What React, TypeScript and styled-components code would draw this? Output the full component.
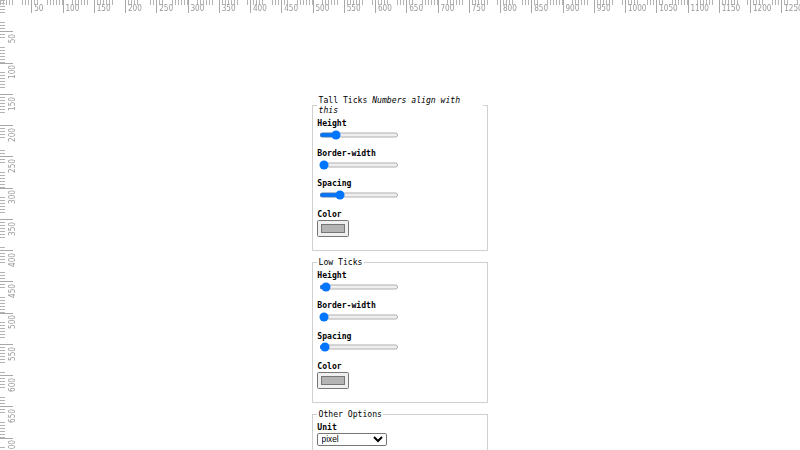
import React, { useState } from "react";
import styled, { createGlobalStyle } from "styled-components";

// page was laid out at 1280x720 and shot at 800x450
const GlobalStyle = createGlobalStyle`
  html, body {
    margin: 0;
    background: #fff;
  }
  body {
    zoom: 0.625;
    font-family: "DejaVu Sans Mono", monospace;
    font-size: 13px;
    color: #000;
  }
`;

const TICK = "#b4b4b4";

const rulerFont = `
  font-family: "Liberation Sans Narrow", "DejaVu Sans Condensed", "Liberation Sans", Arial, sans-serif;
  font-stretch: condensed;
  font-size: 13px;
  line-height: 1;
  color: #9a9a9a;
`;

const TopRuler = styled.div`
  position: fixed;
  top: 0;
  left: 0;
  right: 0;
  height: 20px;
  display: flex;
  padding-left: 50px;
  background-image: repeating-linear-gradient(
    to right,
    ${TICK} 0 1px,
    transparent 1px 5px
  );
  background-size: 100% 8px;
  background-repeat: no-repeat;
  pointer-events: none;
  z-index: 2;
`;

const TopMark = styled.div`
  flex: 0 0 50px;
  height: 20px;
  box-sizing: border-box;
  border-left: 1px solid #a8a8a8;
`;

const TopLabel = styled.span`
  display: block;
  margin: 6px 0 0 3px;
  ${rulerFont}
`;

const SideRuler = styled.div`
  position: fixed;
  top: 0;
  left: 0;
  bottom: 0;
  width: 20px;
  display: flex;
  flex-direction: column;
  padding-top: 50px;
  background-image: repeating-linear-gradient(
    to bottom,
    ${TICK} 0 1px,
    transparent 1px 5px
  );
  background-size: 8px 100%;
  background-repeat: no-repeat;
  pointer-events: none;
  z-index: 2;
`;

const SideMark = styled.div`
  flex: 0 0 50px;
  width: 20px;
  box-sizing: border-box;
  border-top: 1px solid #a8a8a8;
`;

const SideLabel = styled.span`
  display: block;
  margin: 3px 0 0 12px;
  writing-mode: vertical-rl;
  transform: rotate(180deg);
  ${rulerFont}
`;

const Page = styled.div`
  padding-top: 152px;
  min-height: 720px;
  box-sizing: border-box;
`;

const Panel = styled.form`
  width: 282px;
  margin: 0 auto;
  display: flex;
  flex-direction: column;
  gap: 9px;
`;

const Box = styled.fieldset`
  margin: 0;
  min-width: 0;
  padding: 0.35em 7px 0.625em;
  border: 2px groove #d0d0d0;
`;

const Legend = styled.legend`
  padding: 0 2px;
  line-height: normal;
`;

const Field = styled.div`
  margin-bottom: 13.5px;
`;

const Label = styled.label`
  display: block;
  font-weight: bold;
`;

const Slider = styled.input.attrs({ type: "range" })`
  display: block;
  margin: 3px 2px 2px;
  accent-color: #0075ff;
`;

const Swatch = styled.input.attrs({ type: "color" })`
  display: block;
  margin: 2px 0 0;
`;

const Select = styled.select`
  display: block;
  width: 112px;
  height: 20px;
  margin: 2px 0 0;
  padding: 0 2px;
  border: 1px solid #767676;
  border-radius: 3px;
  background-color: #fff;
  color: #000;
  font-family: "Liberation Sans", Arial, sans-serif;
  font-size: 13.33px;
`;

type TickSet = {
  height: number;
  border: number;
  spacing: number;
  color: string;
};

const range = (from: number, to: number, step: number) => {
  const out: number[] = [];
  for (let v = from; v <= to; v += step) out.push(v);
  return out;
};

const TickBox = ({
  title,
  note,
  value,
  onChange,
}: {
  title: string;
  note?: string;
  value: TickSet;
  onChange: (v: TickSet) => void;
}) => (
  <Box>
    <Legend>
      {title}
      {note && (
        <>
          {" "}
          <i>{note}</i>
        </>
      )}
    </Legend>
    <Field>
      <Label>Height</Label>
      <Slider
        min={0}
        max={100}
        value={value.height}
        onChange={(e) => onChange({ ...value, height: +e.target.value })}
      />
    </Field>
    <Field>
      <Label>Border-width</Label>
      <Slider
        min={0}
        max={100}
        value={value.border}
        onChange={(e) => onChange({ ...value, border: +e.target.value })}
      />
    </Field>
    <Field>
      <Label>Spacing</Label>
      <Slider
        min={0}
        max={100}
        value={value.spacing}
        onChange={(e) => onChange({ ...value, spacing: +e.target.value })}
      />
    </Field>
    <Field>
      <Label>Color</Label>
      <Swatch
        value={value.color}
        onChange={(e) => onChange({ ...value, color: e.target.value })}
      />
    </Field>
  </Box>
);

const App = () => {
  const [tall, setTall] = useState<TickSet>({
    height: 17,
    border: 0,
    spacing: 24,
    color: "#b4b4b4",
  });
  const [low, setLow] = useState<TickSet>({
    height: 3,
    border: 0,
    spacing: 2,
    color: "#b4b4b4",
  });
  const [unit, setUnit] = useState("pixel");

  return (
    <>
      <GlobalStyle />
      <TopRuler>
        {range(50, 1250, 50).map((n) => (
          <TopMark key={n}>
            <TopLabel>{n}</TopLabel>
          </TopMark>
        ))}
      </TopRuler>
      <SideRuler>
        {range(50, 700, 50).map((n) => (
          <SideMark key={n}>
            <SideLabel>{n}</SideLabel>
          </SideMark>
        ))}
      </SideRuler>
      <Page>
        <Panel onSubmit={(e) => e.preventDefault()}>
          <TickBox
            title="Tall Ticks"
            note="Numbers align with this"
            value={tall}
            onChange={setTall}
          />
          <TickBox title="Low Ticks" value={low} onChange={setLow} />
          <Box>
            <Legend>Other Options</Legend>
            <Field>
              <Label>Unit</Label>
              <Select value={unit} onChange={(e) => setUnit(e.target.value)}>
                <option value="pixel">pixel</option>
                <option value="inch">inch</option>
                <option value="cm">centimeter</option>
                <option value="mm">millimeter</option>
              </Select>
            </Field>
          </Box>
        </Panel>
      </Page>
    </>
  );
};

export default App;
